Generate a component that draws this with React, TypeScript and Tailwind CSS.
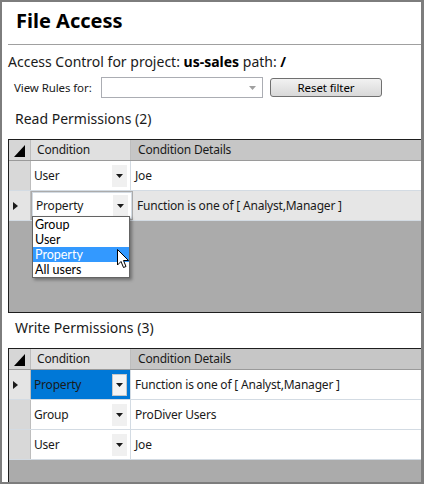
import React from 'react';

type Row = { cond: string; details: string; current?: boolean; selected?: boolean; editing?: boolean };

const readRows: Row[] = [
  { cond: 'User', details: 'Joe' },
  { cond: 'Property', details: 'Function is one of [ Analyst,Manager ]', current: true, editing: true },
];

const writeRows: Row[] = [
  { cond: 'Property', details: 'Function is one of [ Analyst,Manager ]', current: true, selected: true },
  { cond: 'Group', details: 'ProDiver Users' },
  { cond: 'User', details: 'Joe' },
];

const DropArrow: React.FC<{ boxed?: boolean }> = ({ boxed }) => (
  <div
    className={`w-[15px] h-[22px] flex items-center justify-center ${
      boxed ? 'bg-[#f4f4f4] border border-[#c8c8c8]' : 'bg-[#f0f0f0]'
    }`}
  >
    <svg width="7" height="4" viewBox="0 0 7 4">
      <polygon points="0,0 7,0 3.5,4" fill="#1a1a1a" />
    </svg>
  </div>
);

const Grid: React.FC<{ rows: Row[]; height: string; bottomBorder?: boolean; children?: React.ReactNode }> = ({
  rows,
  height,
  bottomBorder,
  children,
}) => (
  <div
    className={`relative ml-[6px] ${height} flex flex-col border-l border-t border-[#1e1e1e] ${
      bottomBorder ? 'border-b' : ''
    } bg-[#ababab] text-[12px] tracking-[-0.2px]`}
  >
    {/* header */}
    <div className="flex h-[21px] border-b border-[#9a9a9a] text-[#1a1a1a]">
      <div className="w-[22px] bg-[#d6d6d6] border-r border-[#bdbdbd] flex items-end justify-center pb-[3px]">
        <svg width="11" height="12" viewBox="0 0 11 12">
          <polygon points="0,12 11,0 11,12" fill="#000" />
        </svg>
      </div>
      <div className="w-[100px] bg-[#e0e0e0] border-r border-[#bdbdbd] pl-[6px] flex items-center">Condition</div>
      <div className="flex-1 bg-[#c6c6c6] pl-[7px] flex items-center">Condition Details</div>
    </div>
    {rows.map((r, i) => (
      <div key={i} className="flex h-[30px] border-b border-[#d3dbe3] text-[#1a1a1a]">
        <div
          className={`w-[22px] border-r border-[#bdbdbd] flex items-center pl-[4px] ${
            r.current ? 'bg-[#e4e4e4]' : 'bg-[#d8d8d8]'
          }`}
        >
          {r.current && (
            <svg width="5" height="8" viewBox="0 0 5 8">
              <polygon points="0,0 5,4 0,8" fill="#1a1a1a" />
            </svg>
          )}
        </div>
        <div
          className={`w-[100px] border-r border-[#d3dbe3] flex items-center pl-[3px] pr-[3px] ${
            r.selected ? 'bg-[#0078d7]' : r.editing ? 'bg-white border border-[#b8b8b8] m-px' : 'bg-white'
          }`}
        >
          <span className="flex-1">{r.cond}</span>
          <DropArrow boxed={r.selected} />
        </div>
        <div className={`flex-1 flex items-center pl-[4px] ${r.editing ? 'bg-[#e6e6e6]' : 'bg-white'}`}>
          {r.details}
        </div>
      </div>
    ))}
    <div className="flex-1" />
    {children}
  </div>
);

const App: React.FC = () => {
  return (
    <div className="w-[424px] h-[484px] bg-white border-l-2 border-t-2 border-b-2 border-r-[3px] border-[#7d7d7d] overflow-hidden flex flex-col font-['Noto_Sans',sans-serif] text-[#1a1a1a]">
      <div className="h-[42px] pl-[14px] pt-[5px] text-[20px] leading-[28px] font-bold text-black">File Access</div>
      <div className="ml-[6px] h-px bg-[#a0a0a0]" />

      <div className="mt-[4px] h-[24px] pl-[6px] flex items-center text-[14px] whitespace-nowrap">
        Access Control for project:&nbsp;<b className="text-black">us-sales</b>&nbsp;path:&nbsp;<b className="text-black">/</b>
      </div>

      <div className="mt-[4px] h-[21px] flex items-center text-[11.5px] tracking-[-0.1px]">
        <span className="pl-[12px] w-[99px]">View Rules for:</span>
        <div className="w-[162px] h-[21px] border border-[#abadb3] bg-white flex items-center justify-end pr-[6px]">
          <svg width="7" height="4" viewBox="0 0 7 4">
            <polygon points="0,0 7,0 3.5,4" fill="#a0a0a0" />
          </svg>
        </div>
        <button className="ml-[7px] w-[112px] h-[19px] rounded-[3px] border border-[#707070] bg-gradient-to-b from-[#f2f2f2] to-[#d8d8d8] text-black leading-none">
          Reset filter
        </button>
      </div>

      <div className="mt-[11px] h-[20px] pl-[13px] text-[14px] leading-[20px]">Read Permissions (2)</div>
      <div className="mt-[10px]">
        <Grid rows={readRows} height="h-[174px]" bottomBorder>
          {/* open dropdown list */}
          <div className="absolute left-[23px] top-[76px] w-[98px] border border-[#646464] bg-white shadow-[2px_2px_3px_rgba(0,0,0,0.35)] font-['Lato',sans-serif] text-[12.5px] tracking-normal text-black">
            {['Group', 'User', 'Property', 'All users'].map((o) => (
              <div
                key={o}
                className={`h-[15px] leading-[15px] pl-[2px] ${o === 'Property' ? 'bg-[#3399ff] text-white' : ''}`}
              >
                {o}
              </div>
            ))}
          </div>
          {/* mouse pointer */}
          <svg className="absolute left-[108px] top-[109px]" width="13" height="20" viewBox="0 0 13 20">
            <path d="M0.5 0.5 L0.5 16 L4 12.5 L6.5 18.5 L9 17.5 L6.5 11.5 L11.5 11.5 Z" fill="#fff" stroke="#000" strokeWidth="1" />
          </svg>
        </Grid>
      </div>

      <div className="mt-[5px] h-[20px] pl-[13px] text-[14px] leading-[20px]">Write Permissions (3)</div>
      <div className="mt-[10px] flex-1 flex flex-col">
        <Grid rows={writeRows} height="flex-1" />
      </div>
    </div>
  );
};

export default App;
